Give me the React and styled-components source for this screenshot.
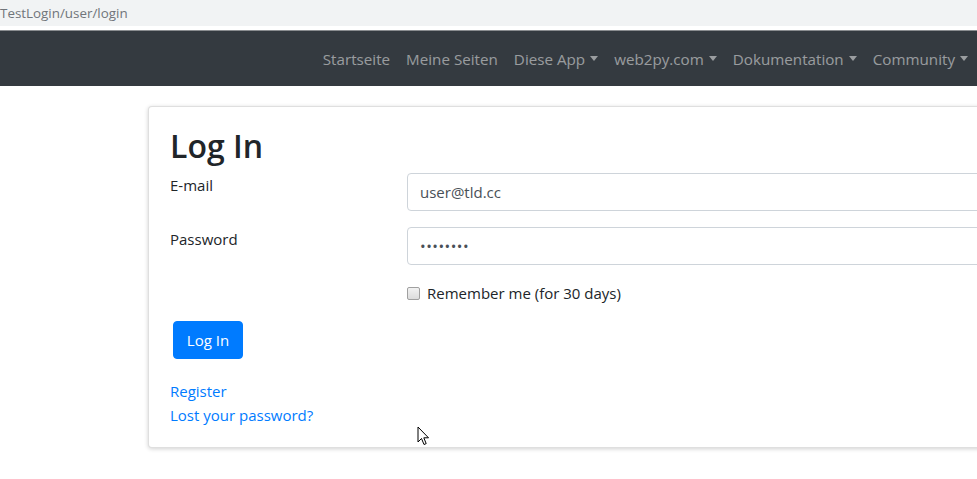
import React from "react";
import styled, { createGlobalStyle } from "styled-components";

const Global = createGlobalStyle`
  html, body { margin: 0; padding: 0; background: #fff; overflow: hidden; }
  body { font-family: "Open Sans", "Noto Sans", Arial, sans-serif; color: #212529; }
  * { box-sizing: border-box; }
`;

const Page = styled.div`
  width: 977px;
  height: 479px;
  position: relative;
  overflow: hidden;
`;

const UrlBar = styled.div`
  height: 26px;
  background: #f1f3f4;
  color: #70757a;
  font-size: 13.4px;
  line-height: 26px;
  white-space: nowrap;
  border-bottom: 4px solid #fff;
  box-sizing: content-box;
`;

const Navbar = styled.nav`
  height: 56px;
  background: #343a40;
  display: flex;
  align-items: center;
  justify-content: flex-end;
  border-top: 1px solid #8a8d90;
`;

const NavList = styled.ul`
  display: flex;
  list-style: none;
  margin: 0;
  padding: 0;
`;

const NavLink = styled.a`
  display: flex;
  align-items: center;
  padding: 8px;
  font-size: 15.2px;
  line-height: 24px;
  color: rgba(255, 255, 255, 0.5);
  text-decoration: none;
  white-space: nowrap;
`;

const Caret = styled.span`
  display: inline-block;
  margin-left: 5px;
  width: 0;
  height: 0;
  border-top: 5px solid rgba(255, 255, 255, 0.5);
  border-left: 4.5px solid transparent;
  border-right: 4.5px solid transparent;
`;

const SearchBox = styled.div`
  width: 60px;
  height: 31px;
  margin-left: 1px;
  margin-right: -60px;
  border: 1px solid #ced4da;
  border-radius: 3px;
  background: #343a40;
`;

const Main = styled.main`
  padding: 20px 0 0 148px;
`;

const Card = styled.section`
  width: 900px;
  border: 1px solid rgba(0, 0, 0, 0.125);
  border-radius: 4px;
  box-shadow: 0 1px 4px rgba(0, 0, 0, 0.18);
  padding: 20px 21px;
  background: #fff;
`;

const Title = styled.h2`
  margin: 0 0 8px;
  font-size: 32px;
  line-height: 38px;
  font-weight: 600;
  color: #212529;
`;

const FormRow = styled.div`
  display: grid;
  grid-template-columns: 237px 1fr;
  margin-bottom: 16px;
`;

const Label = styled.label`
  font-size: 15px;
  line-height: 24px;
  color: #212529;
`;

const Input = styled.input`
  height: 38px;
  padding: 6px 12px;
  font-family: inherit;
  font-size: 15px;
  line-height: 24px;
  color: #495057;
  border: 1px solid #ced4da;
  border-radius: 4px;
  background: #fff;
  outline: none;
  letter-spacing: ${(p) => (p.type === "password" ? "0.5px" : "normal")};
`;

const CheckWrap = styled.label`
  grid-column: 2;
  display: flex;
  align-items: center;
  font-size: 15px;
  line-height: 24px;
  color: #212529;
`;

const Check = styled.input`
  appearance: none;
  width: 13px;
  height: 13px;
  margin: 0 7px 0 0;
  border: 1px solid #a0a0a0;
  border-radius: 2px;
  background: linear-gradient(#f2f2f2, #dcdcdc);
`;

const Button = styled.button`
  margin-left: 3px;
  height: 38px;
  width: 70px;
  padding: 0;
  font-family: inherit;
  font-size: 15px;
  color: #fff;
  background: #007bff;
  border: 1px solid #007bff;
  border-radius: 4px;
`;

const Links = styled.div`
  display: flex;
  flex-direction: column;
  align-items: flex-start;
  margin-top: 20px;
`;

const A = styled.a`
  color: #007bff;
  text-decoration: none;
  font-size: 15px;
  line-height: 24px;
`;

const Cursor = styled.svg`
  position: absolute;
  left: 417px;
  top: 426px;
`;

export default function App() {
  const items = [
    ["Startseite", false],
    ["Meine Seiten", false],
    ["Diese App", true],
    ["web2py.com", true],
    ["Dokumentation", true],
    ["Community", true],
  ];
  return (
    <Page>
      <Global />
      <UrlBar>TestLogin/user/login</UrlBar>
      <Navbar>
        <NavList>
          {items.map(([t, c]) => (
            <li key={t}>
              <NavLink href="#">
                {t}
                {c && <Caret />}
              </NavLink>
            </li>
          ))}
        </NavList>
        <SearchBox />
      </Navbar>
      <Main>
        <Card>
          <Title>Log In</Title>
          <FormRow>
            <Label>E-mail</Label>
            <Input type="text" defaultValue="user@tld.cc" />
          </FormRow>
          <FormRow>
            <Label>Password</Label>
            <Input type="password" defaultValue="password" />
          </FormRow>
          <FormRow>
            <CheckWrap>
              <Check type="checkbox" />
              Remember me (for 30 days)
            </CheckWrap>
          </FormRow>
          <Button>Log In</Button>
          <Links>
            <A href="#">Register</A>
            <A href="#">Lost your password?</A>
          </Links>
        </Card>
      </Main>
      <Cursor width="13" height="21" viewBox="0 0 13 21">
        <path d="M1 1 L1 16 L4.5 12.5 L7 18.5 L9.2 17.6 L6.8 11.8 L11.5 11.8 Z" fill="#fff" stroke="#000" strokeWidth="1" strokeLinejoin="round" />
      </Cursor>
    </Page>
  );
}
